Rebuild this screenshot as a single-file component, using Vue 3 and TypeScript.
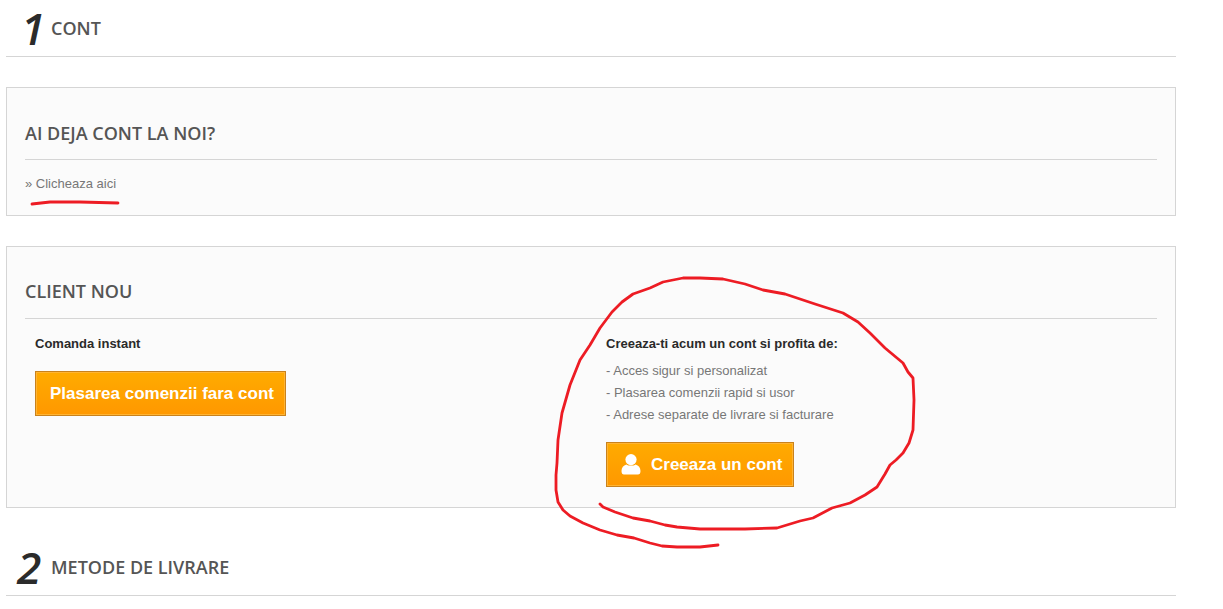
<script setup lang="ts">
const perks = [
  "Acces sigur si personalizat",
  "Plasarea comenzii rapid si usor",
  "Adrese separate de livrare si facturare",
];

// hand drawn marker strokes over the page
const circle =
  "M718 545 L700 547 L677 547 L662 546 L650 543 L634 538 L617 535 L600 530 L583 523 L570 516 L563 510 L558 502 L556 490 L556 475 L557 463 L558 440 L562 413 L570 385 L580 360 L590 345 L600 328 L612 312 L622 302 L633 294 L650 288 L663 282 L683 278 L700 278 L723 279 L745 284 L763 290 L785 294 L815 304 L843 313 L858 322 L870 333 L885 348 L903 363 L908 372 L913 378 L914 400 L913 430 L909 443 L903 453 L896 460 L890 465 L885 474 L877 487 L865 495 L850 503 L832 508 L813 518 L800 521 L777 528 L745 529 L700 529 L677 527 L665 525 L650 521 L633 518 L615 512 L603 507 L600 504";
const underline = "M32 204 L50 202 L80 202 L118 203";
</script>

<template>
  <div class="page">
    <section class="step-head">
      <span class="step-num">1</span>
      <h2>CONT</h2>
    </section>

    <section class="box box-login">
      <h3>AI DEJA CONT LA NOI?</h3>
      <a class="click-link" href="#">» Clicheaza aici</a>
    </section>

    <section class="box box-new">
      <h3>CLIENT NOU</h3>
      <div class="cols">
        <div>
          <p class="lead">Comanda instant</p>
          <button class="cta cta-guest" type="button">Plasarea comenzii fara cont</button>
        </div>
        <div>
          <p class="lead">Creeaza-ti acum un cont si profita de:</p>
          <ul class="perks">
            <li v-for="p in perks" :key="p">- {{ p }}</li>
          </ul>
          <button class="cta cta-account" type="button">
            <svg class="user-icon" viewBox="0 0 20 21" width="20" height="21" aria-hidden="true">
              <ellipse cx="10" cy="5.6" rx="5.6" ry="5.6" fill="#fff" />
              <path
                d="M0.5 17 C0.5 13.5 2.5 11.2 5.4 10.4 C7 12 13 12 14.6 10.4 C17.5 11.2 19.5 13.5 19.5 17 C19.5 19.5 18.5 20.5 17 20.5 L3 20.5 C1.5 20.5 0.5 19.5 0.5 17 Z"
                fill="#fff"
              />
            </svg>
            Creeaza un cont
          </button>
        </div>
      </div>
    </section>

    <section class="step-head step-two">
      <span class="step-num">2</span>
      <h2>METODE DE LIVRARE</h2>
    </section>

    <svg class="marks" width="1223" height="609" viewBox="0 0 1223 609" aria-hidden="true">
      <path :d="circle" />
      <path :d="underline" />
    </svg>
  </div>
</template>

<style>
html,
body {
  background: #fff;
  overflow: hidden;
}
</style>

<style scoped>
.page {
  position: relative;
  width: 1170px;
  height: 609px;
  margin-left: 6px;
  font-family: "Liberation Sans", Arial, sans-serif;
  font-size: 13px;
  color: #777;
}

.step-head {
  display: flex;
  align-items: center;
  height: 56px;
  border-bottom: 1px solid #d5d5d5;
  box-sizing: content-box;
}

.step-two {
  margin-top: 31px;
}

.step-num {
  width: 45px;
  padding-left: 15px;
  box-sizing: border-box;
  font-family: "Open Sans", sans-serif;
  font-size: 44px;
  font-style: italic;
  font-weight: 600;
  line-height: 56px;
  color: #2b2b2b;
}

.step-two .step-num {
  padding-left: 11px;
}

h2,
h3 {
  margin: 0;
  font-family: "Open Sans", sans-serif;
  font-size: 18px;
  font-weight: 600;
  color: #555;
}

.step-head h2 {
  line-height: 56px;
}

.box {
  margin-top: 30px;
  padding: 0 18px;
  background: #fbfbfb;
  border: 1px solid #d5d5d5;
}

.box h3 {
  height: 72px;
  padding-top: 30px;
  box-sizing: border-box;
  line-height: 30px;
  border-bottom: 1px solid #d5d5d5;
}

.box-login {
  height: 127px;
}

.click-link {
  display: block;
  margin-top: 15px;
  line-height: 18px;
  color: #777;
  text-decoration: none;
}

.box-new {
  height: 260px;
}

.box-new h3 {
  padding-top: 29px;
}

.cols {
  display: grid;
  grid-template-columns: 571px 1fr;
  padding: 15px 0 0 10px;
}

.lead {
  margin: 0;
  font-weight: 700;
  line-height: 20px;
  color: #2a2a2a;
}

.perks {
  margin: 6px 0 0;
  padding: 0;
  list-style: none;
  line-height: 22px;
}

.cta {
  display: flex;
  align-items: center;
  height: 45px;
  box-sizing: border-box;
  border: 1px solid #c9821c;
  box-shadow: inset 0 0 0 1px #ffb433;
  background: linear-gradient(#ffab00, #ff9800);
  color: #fff;
  font-family: "Liberation Sans", Arial, sans-serif;
  font-size: 17px;
  font-weight: 700;
  white-space: nowrap;
  cursor: pointer;
}

.cta-guest {
  width: 251px;
  margin-top: 17px;
  padding: 0 0 0 14px;
}

.cta-account {
  width: 188px;
  margin-top: 16px;
  padding: 0 0 0 14px;
}

.user-icon {
  margin-right: 10px;
  flex-shrink: 0;
}

.marks {
  position: absolute;
  top: 0;
  left: -6px;
  pointer-events: none;
}

.marks path {
  fill: none;
  stroke: #ed1c24;
  stroke-width: 2.8;
  stroke-linecap: round;
  stroke-linejoin: round;
}
</style>
